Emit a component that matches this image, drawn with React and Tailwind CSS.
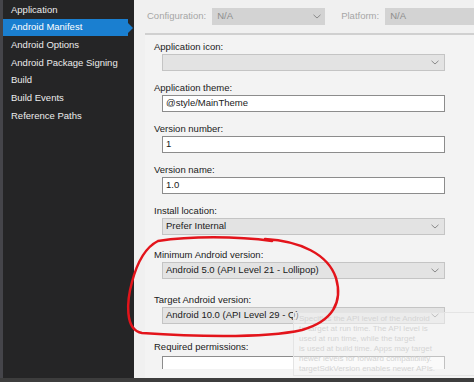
import React from 'react';

const navItems = [
  'Application',
  'Android Manifest',
  'Android Options',
  'Android Package Signing',
  'Build',
  'Build Events',
  'Reference Paths',
];

const Chevron = ({ className = '' }) => (
  <svg width="8" height="5" viewBox="0 0 8 5" className={className}>
    <path d="M0.5 0.8 L4 4 L7.5 0.8" fill="none" stroke="#8a8a8a" strokeWidth="1" />
  </svg>
);

const Dropdown = ({ value }) => (
  <div className="ml-[8px] mr-[29px] h-[17px] flex items-center justify-between border border-[#c4c4c4] bg-[#e3e3e3] pl-[3px] pr-[5px] text-[#1a1a1a]">
    <span>{value}</span>
    <Chevron />
  </div>
);

const TextBox = ({ value }) => (
  <div className="ml-[8px] mr-[29px] h-[17px] flex items-center border border-[#8c8c8c] bg-white pl-[3px] text-[#1a1a1a]">
    {value}
  </div>
);

const Field = ({ label, className = '', children }) => (
  <div className={className}>
    <div className="h-[14px] leading-[14px] text-[#1a1a1a]">{label}</div>
    {children}
  </div>
);

export default function App() {
  return (
    <div className="relative w-[474px] h-[382px] overflow-hidden flex flex-col bg-[#3d3d3d] font-['Liberation_Sans',sans-serif] text-[9.5px]">
      <div className="flex flex-1 min-h-0">
        {/* sidebar */}
        <div className="w-[134px] shrink-0 flex border-l-[3px] border-[#45454a] bg-[#252526]">
          <div className="relative flex-1 pt-[1px]">
            {navItems.map((item) => {
              const active = item === 'Android Manifest';
              return (
                <div
                  key={item}
                  className={
                    active
                      ? 'relative h-[17.7px] flex items-center pl-[8px] mr-[6px] bg-[#1a7fd0] text-white'
                      : 'h-[17.7px] flex items-center pl-[8px] text-[#ececec]'
                  }
                >
                  {item}
                  {active && (
                    <span className="absolute right-[-5px] top-1/2 -translate-y-1/2 w-0 h-0 border-y-[5px] border-y-transparent border-l-[5px] border-l-[#1a7fd0]" />
                  )}
                </div>
              );
            })}
          </div>
        </div>

        {/* content */}
        <div className="flex-1 min-w-0 flex flex-col bg-[#f0f0f0] pl-[11px]">
          <div className="h-[35px] shrink-0 flex items-center border-b-2 border-[#d0d0d0] pl-[2px]">
            <span className="text-[#a6a6a6]">Configuration:</span>
            <div className="ml-[6px] w-[113px] h-[17px] flex items-center justify-between bg-[#d3d3d3] pl-[5px] pr-[4px] text-[#8d8d8d]">
              <span>N/A</span>
              <Chevron />
            </div>
            <span className="ml-[16px] text-[#a6a6a6]">Platform:</span>
            <div className="ml-[6px] flex-1 h-[17px] flex items-center bg-[#d3d3d3] pl-[5px] text-[#8d8d8d]">
              N/A
            </div>
          </div>

          <div className="flex-1 min-h-0 overflow-hidden pl-[9px] bg-[#f3f3f3] pb-[6px]">
            <Field label="Application icon:" className="pt-[5px]">
              <Dropdown value="" />
            </Field>
            <Field label="Application theme:" className="mt-[10px]">
              <TextBox value="@style/MainTheme" />
            </Field>
            <Field label="Version number:" className="mt-[10px]">
              <TextBox value="1" />
            </Field>
            <Field label="Version name:" className="mt-[10px]">
              <TextBox value="1.0" />
            </Field>
            <Field label="Install location:" className="mt-[10px]">
              <Dropdown value="Prefer Internal" />
            </Field>
            <Field label="Minimum Android version:" className="mt-[13px]">
              <Dropdown value="Android 5.0 (API Level 21 - Lollipop)" />
            </Field>
            <Field label="Target Android version:" className="mt-[14px]">
              <Dropdown value="Android 10.0 (API Level 29 - Q)" />
            </Field>
            <Field label="Required permissions:" className="mt-[16px]">
              <div className="ml-[8px] mr-[29px] mt-[2px] h-[13px] border border-b-0 border-[#8c8c8c] bg-white" />
            </Field>
          </div>
        </div>
      </div>
      <div className="h-[4px] shrink-0 bg-[#3d3d3d]" />

      {/* faded tooltip */}
      <div className="absolute left-[293px] top-[312px] w-[181px] h-[64px] border border-[#e4e4e4] border-r-0 bg-[#f5f5f5]/50 pl-[5px] pt-[1px] text-[8px] leading-[10px] text-[#d4d4d4] overflow-hidden">
        <div>Specifies the API level of the Android</div>
        <div>to target at run time. The API level is</div>
        <div>used at run time, while the target</div>
        <div>is used at build time. Apps may target</div>
        <div>newer levels for forward compatibility.</div>
        <div>targetSdkVersion enables newer APIs.</div>
      </div>

      {/* red annotation */}
      <svg className="absolute inset-0 pointer-events-none" width="474" height="382" viewBox="0 0 474 382">
        <path
          d="M265 239 C300 241 328 254 336 278 C343 302 333 321 302 330 C262 339 185 336 142 333 C124 330 127 300 132 282 C137 263 146 247 158 241 C190 236 236 236 272 241"
          fill="none"
          stroke="#e3141b"
          strokeWidth="2.5"
          strokeLinecap="round"
        />
      </svg>
    </div>
  );
}
